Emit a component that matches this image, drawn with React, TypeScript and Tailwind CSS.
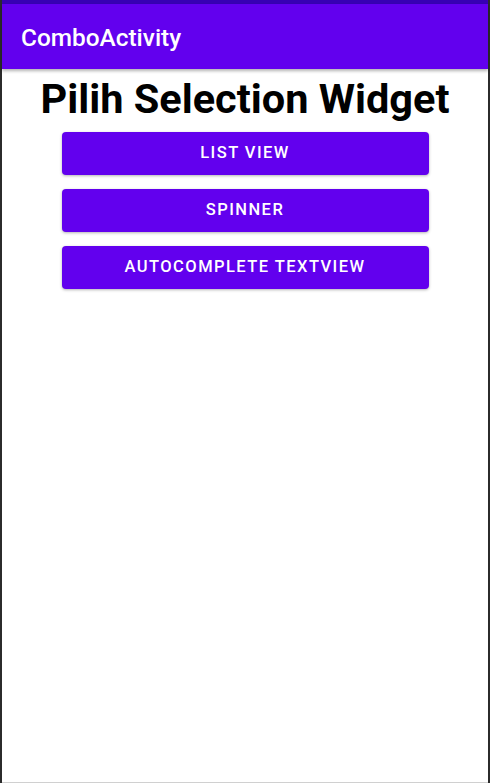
import React from "react";

export default function App() {
  const buttons = ["LIST VIEW", "SPINNER", "AUTOCOMPLETE TEXTVIEW"];
  return (
    <div className="w-[490px] h-[783px] bg-[#2b2b2b] flex px-[2px] overflow-hidden" style={{ fontFamily: "Roboto, 'Noto Sans', sans-serif" }}>
      <div className="flex-1 flex flex-col bg-white border-b border-[#d0d0d0]">
        <div className="h-[4px] bg-[#3700b3]" />
        <div className="h-[65px] bg-[#6200ee] flex items-center pl-[19px] pt-[3px] shadow-[0_2px_3px_rgba(0,0,0,0.3)] relative z-10">
          <span className="text-white text-[24.4px] font-medium leading-none">ComboActivity</span>
        </div>
        <div className="flex flex-col items-center pt-[6px]">
          <h1 className="text-black text-[41.5px] font-bold leading-[48px]">Pilih Selection Widget</h1>
          <div className="flex flex-col gap-[14px] mt-[9px]">
            {buttons.map((b) => (
              <button
                key={b}
                className="w-[367px] h-[43px] bg-[#6200ee] rounded-[4px] text-white text-[16.5px] font-medium tracking-[1.45px] shadow-[0_1px_3px_rgba(0,0,0,0.3)]"
              >
                {b}
              </button>
            ))}
          </div>
        </div>
      </div>
    </div>
  );
}
